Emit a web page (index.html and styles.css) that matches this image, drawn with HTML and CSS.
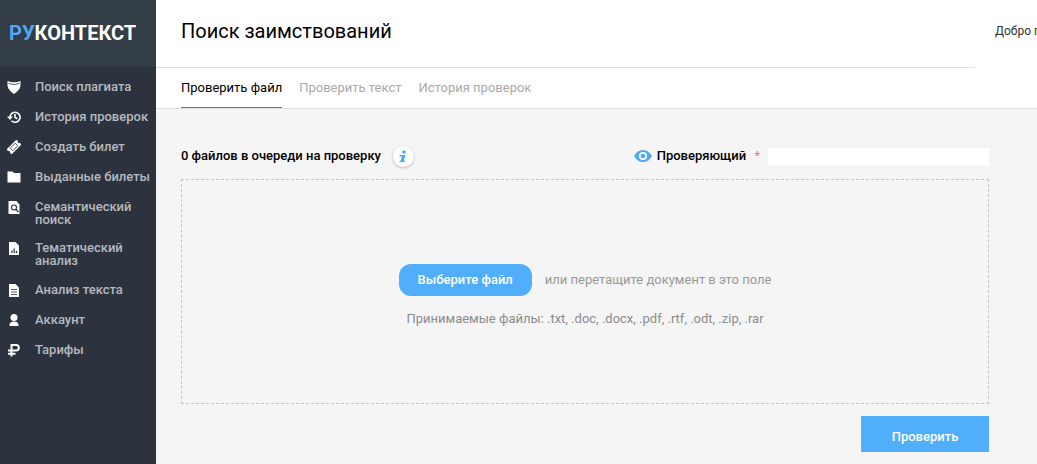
FILE: index.html
```html
<!DOCTYPE html>
<html lang="ru">
<head>
  <meta charset="UTF-8" />
  <meta name="viewport" content="width=device-width, initial-scale=1.0"/>
  <title>Руконтекст</title>
  <link rel="stylesheet" href="styles.css">
</head>
<body>
  <!-- Sidebar -->
  <aside class="sidebar">
    <a class="logo" href="#"><span>РУ</span>КОНТЕКСТ</a>
    <nav>
      <ul class="menu">
        <li><a href="#">
          <svg viewBox="0 0 14 14"><path d="M.5 1q3 1.200 6.500 1.200T13.500 1v4.500Q13 10 7 14 1 10 .5 5.500z"/><path class="cut thin" d="M1.500 3.500q5.500 2 11 0"/></svg>
          Поиск плагиата
        </a></li>
        <li><a href="#">
          <svg viewBox="0 0 14 14"><path class="line" d="M3 7a5 5 0 1 1 1.500 3.800M8 4v3.300l2.300 1.400"/><path d="M0 6.500h6L3 10z"/></svg>
          История проверок
        </a></li>
        <li><a href="#">
          <svg viewBox="0 0 14 14"><g transform="rotate(-45 7 7)"><path d="M0 3.500h14v2.200a1.400 1.400 0 0 0 0 2.600v2.200H0V8.300a1.400 1.400 0 0 0 0-2.600z"/><path class="cut thin" d="M3.500 5.200h7v3.600h-7z"/></g></svg>
          Создать билет
        </a></li>
        <li><a href="#">
          <svg viewBox="0 0 14 14"><path d="M.5 1.500h5L7 3h6.500v9.500H.5z"/></svg>
          Выданные билеты
        </a></li>
        <li><a href="#">
          <svg viewBox="0 0 14 14"><path d="M1.500 1h8l3 3.500V14h-11z"/><circle class="cut" cx="7" cy="7.500" r="2.500"/><path class="cut" d="M9 9.500l2.500 2.700"/></svg>
          Семантический поиск
        </a></li>
        <li><a href="#">
          <svg viewBox="0 0 14 14"><path d="M2 1h6.500L12 4.500V14H2z"/><path class="cut" d="M5 12v-2.500M7.200 12V7.500M9.400 12v-2"/></svg>
          Тематический анализ
        </a></li>
        <li><a href="#">
          <svg viewBox="0 0 14 14"><path d="M2 1h6.500L12 4.500V14H2z"/><path class="cut thin" d="M4 6.500h6M4 9h6M4 11.500h6"/></svg>
          Анализ текста
        </a></li>
        <li><a href="#">
          <svg viewBox="0 0 14 14"><circle cx="7" cy="4.500" r="3.500"/><path d="M2.500 13q-.5-4.500 4.500-4.500t4.500 4.500z"/></svg>
          Аккаунт
        </a></li>
        <li><a href="#">
          <svg viewBox="0 0 14 14"><path class="ruble" d="M4.500 13.500V2H9a2.700 2.700 0 0 1 0 5.600H1M1 10.800h7.500"/></svg>
          Тарифы
        </a></li>
      </ul>
    </nav>
  </aside>

  <!-- Main Content -->
  <main class="main">
    <header class="header">
      <h1>Поиск заимствований</h1>
      <div class="welcome">Добро п</div>
    </header>
    <nav class="tabs">
      <a class="active" href="#">Проверить файл</a>
      <a href="#">Проверить текст</a>
      <a href="#">История проверок</a>
    </nav>

    <form class="content">
      <div class="toolbar">
        <div class="queue">
          <span class="caption">0 файлов в очереди на проверку</span>
          <button class="info" type="button" aria-label="Информация">
            <svg viewBox="0 0 10 14"><circle cx="6" cy="2.200" r="1.900"/><path d="M1.500 5.500h6L6 11.500h1.500l-.4 1.500H1.200l.4-1.500h1L3.700 7H1.200z"/></svg>
          </button>
        </div>
        <div class="reviewer">
          <svg viewBox="0 0 18 12"><path d="M0 6Q3.500 0 9 0t9 6q-3.500 6-9 6T0 6z"/><circle class="ring" cx="9" cy="6" r="3.200"/></svg>
          <label class="caption" for="reviewer">Проверяющий <span class="required">*</span></label>
          <input type="text" id="reviewer">
        </div>
      </div>

      <div class="dropzone">
        <div class="choose">
          <button class="choose-btn" type="button">Выберите файл</button>
          <span class="caption">или перетащите документ в это поле</span>
        </div>
        <p>Принимаемые файлы: .txt, .doc, .docx, .pdf, .rtf, .odt, .zip, .rar</p>
      </div>

      <button class="submit" type="submit">Проверить</button>
    </form>
  </main>
</body>
</html>
```
FILE: styles.css
```css
* {
  box-sizing: border-box;
}

body {
  margin: 0;
  min-height: 100vh;
  display: flex;
  background: #f5f5f5;
  font-family: Roboto, sans-serif;
  font-size: 13px;
  color: #000;
  overflow: hidden;
}

a {
  text-decoration: none;
}

button, input {
  font-family: inherit;
  border: none;
}

button {
  cursor: pointer;
}

/* Sidebar */
.sidebar {
  flex: 0 0 156px;
  background: #2c333e;
}

.logo {
  display: flex;
  align-items: center;
  height: 67px;
  padding: 0 9px 2px;
  background: #333d46;
  color: #fff;
  font-size: 20px;
  font-weight: 700;
}

.logo span {
  color: #4fa8f5;
}

.menu {
  display: flex;
  flex-direction: column;
  justify-content: space-between;
  height: 277px;
  margin: 13px 0 0;
  padding: 0;
  list-style: none;
}

.menu a {
  display: flex;
  gap: 14px;
  padding: 0 4px 0 7px;
  color: #b5b9be;
  font-weight: 500;
  line-height: 13px;
}

.menu svg {
  flex: none;
  width: 14px;
  height: 14px;
  fill: #fff;
}

.menu .cut {
  fill: none;
  stroke: #2c333e;
  stroke-width: 1.2;
}

.menu .thin {
  stroke-width: 0.8;
}

.menu .line {
  fill: none;
  stroke: #fff;
  stroke-width: 1.6;
}

.menu .ruble {
  fill: none;
  stroke: #fff;
  stroke-width: 2;
}

/* Header and tabs */
.main {
  flex: 1;
  min-width: 0;
}

.header {
  display: flex;
  height: 68px;
  background: #fff;
}

.header h1 {
  flex: 1;
  margin: 0;
  padding-left: 25px;
  border-bottom: 1px solid #e0e0e0;
  font-size: 20px;
  font-weight: 400;
  line-height: 62px;
}

.welcome {
  flex: 0 0 62px;
  min-width: 0;
  padding-left: 20px;
  font-size: 12px;
  line-height: 62px;
  color: #333;
  white-space: nowrap;
}

.tabs {
  display: flex;
  gap: 17px;
  height: 41px;
  padding-left: 25px;
  border-bottom: 1px solid #e0e0e0;
  background: #fff;
}

.tabs a {
  color: #aaa;
  line-height: 40px;
}

.tabs .active {
  border-bottom: 1px solid #2f86cc;
  color: #000;
}

/* File check form */
.content {
  display: flex;
  flex-direction: column;
  padding: 35px 48px 12px 25px;
}

.toolbar {
  display: flex;
  justify-content: space-between;
  align-items: center;
  height: 24px;
  margin-bottom: 11px;
  font-weight: 500;
}

.queue, .reviewer {
  display: flex;
  align-items: center;
}

.queue {
  gap: 12px;
}

.caption {
  padding-bottom: 2px;
}

.info {
  display: flex;
  align-items: center;
  justify-content: center;
  width: 21px;
  height: 21px;
  padding: 0;
  border-radius: 50%;
  background: #fff;
  box-shadow: 0 1px 3px rgba(0, 0, 0, 0.25);
}

.info svg {
  width: 10px;
  height: 13px;
  fill: #4fa8f5;
}

.reviewer svg {
  width: 18px;
  height: 12px;
  margin-right: 5px;
  fill: #4fa8f5;
}

.reviewer .ring {
  fill: none;
  stroke: #fff;
  stroke-width: 1.7;
}

.required {
  margin: 0 8px 0 5px;
  color: #f0766c;
  font-weight: 400;
}

.reviewer input {
  width: 221px;
  height: 17px;
  padding: 0 4px;
  background: #fff;
}

.dropzone {
  display: flex;
  flex-direction: column;
  align-items: center;
  gap: 14px;
  padding: 84px 0 76px;
  border: 1px dashed #c6c6c6;
  color: #8c8c8c;
}

.choose {
  display: flex;
  align-items: center;
  gap: 13px;
  color: #999;
}

.choose-btn {
  height: 32px;
  padding: 0 19px 2px;
  border-radius: 12px;
  background: #50aefb;
  color: #fff;
  font-size: 13px;
  font-weight: 500;
}

.dropzone p {
  margin: 0;
  line-height: 17px;
}

.submit {
  align-self: flex-end;
  width: 128px;
  height: 36px;
  margin-top: 12px;
  padding: 4px 0 0;
  background: #50aefb;
  color: #fff;
  font-size: 13px;
  font-weight: 500;
}
```
